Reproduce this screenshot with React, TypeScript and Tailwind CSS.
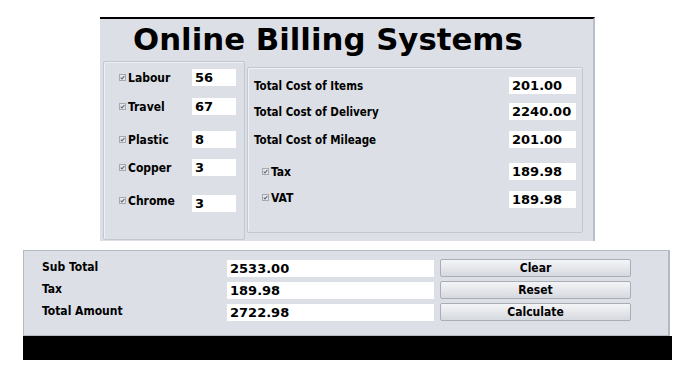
import type { ReactNode } from 'react'

const font = { fontFamily: '"DejaVu Sans Condensed", "DejaVu Sans", sans-serif' }
const wide = { fontFamily: '"DejaVu Sans", sans-serif' }

function Check() {
  return (
    <svg width="7" height="7" viewBox="0 0 7 7" className="mr-[2px] shrink-0">
      <rect x="0.5" y="0.5" width="6" height="6" fill="#e4e6ea" stroke="#a4a9b2" />
      <path d="M1.7 3.6 L3 4.9 L5.4 2" fill="none" stroke="#5f6570" strokeWidth="1.1" />
    </svg>
  )
}

function Field({ value, className }: { value: string; className: string }) {
  return (
    <div
      className={`flex h-[17px] items-center bg-white pl-[3px] text-[13px] font-bold leading-[17px] text-black ${className}`}
      style={wide}
    >
      {value}
    </div>
  )
}

function LeftRow({ label, value, className, raise }: { label: string; value: string; className: string; raise?: boolean }) {
  return (
    <div className={`flex h-[17px] items-center ${className}`}>
      <div className={`flex w-[74px] items-center pl-[1px] ${raise ? '-translate-y-[3px]' : ''}`}>
        <Check />
        <span className="text-[12px] font-bold leading-[14px]">{label}</span>
      </div>
      <Field value={value} className="w-[44px]" />
    </div>
  )
}

function RightRow({ label, value, className, check, raise }: { label: string; value: string; className: string; check?: boolean; raise?: boolean }) {
  return (
    <div className={`flex h-[17px] items-center justify-between ${className}`}>
      {check ? (
        <div className={`flex items-center pl-[8px] ${raise ? '-translate-y-[2px]' : ''}`}>
          <Check />
          <span className="text-[12px] font-bold leading-[14px]">{label}</span>
        </div>
      ) : (
        <span className="text-[11.5px] font-bold leading-[14px]">{label}</span>
      )}
      <Field value={value} className="w-[67px]" />
    </div>
  )
}

function Button({ children }: { children: ReactNode }) {
  return (
    <button className="flex h-[18px] w-[191px] items-center justify-center rounded-[2px] border border-[#a9adb5] bg-gradient-to-b from-[#f4f5f7] to-[#d6d9df] text-[12px] font-bold leading-[14px] text-black">
      {children}
    </button>
  )
}

export default function App() {
  return (
    <div className="h-[376px] w-[700px] overflow-hidden bg-white text-black" style={font}>
      <div className="ml-[100px] mt-[17px] h-[224px] w-[495px] border-t-2 border-r-2 border-black border-r-[#b9bdc5] bg-[#dcdfe5]">
        <h1 className="h-[42px] pl-[33px] text-[30.8px] font-bold leading-[40px]" style={wide}>
          Online Billing Systems
        </h1>
        <div className="flex items-start pl-[3px]">
          <div className="h-[179px] w-[142px] rounded-[2px] border border-[#c3c7cf] pl-[14px] pt-[7px] shadow-[inset_1px_1px_0_#eef0f3]">
            <LeftRow label="Labour" value="56" className="" />
            <LeftRow label="Travel" value="67" className="mt-[12px]" />
            <LeftRow label="Plastic" value="8" className="mt-[16px]" />
            <LeftRow label="Copper" value="3" className="mt-[11px]" />
            <LeftRow label="Chrome" value="3" className="mt-[19px]" raise />
          </div>
          <div className="ml-[2px] mt-[6px] h-[166px] w-[336px] rounded-[2px] border border-[#c3c7cf] pl-[6px] pr-[6px] pt-[9px] shadow-[inset_1px_1px_0_#eef0f3]">
            <RightRow label="Total Cost of Items" value="201.00" className="" />
            <RightRow label="Total Cost of Delivery" value="2240.00" className="mt-[9px]" />
            <RightRow label="Total Cost of Mileage" value="201.00" className="mt-[11px]" />
            <RightRow label="Tax" value="189.98" className="mt-[15px]" check />
            <RightRow label="VAT" value="189.98" className="mt-[11px]" check raise />
          </div>
        </div>
      </div>

      <div className="ml-[23px] mt-[9px] h-[86px] w-[647px] border border-[#b5b9c1] border-r-2 bg-[#dcdfe5] pt-[9px]">
        <div className="flex">
          <div className="flex w-[203px] flex-col pl-[18px] text-[12px] font-bold leading-[14px]">
            <span className="h-[22px]">Sub Total</span>
            <span className="h-[22px]">Tax</span>
            <span className="h-[22px]">Total Amount</span>
          </div>
          <div className="flex flex-col gap-[5px]">
            <Field value="2533.00" className="w-[207px]" />
            <Field value="189.98" className="w-[207px]" />
            <Field value="2722.98" className="w-[207px]" />
          </div>
          <div className="ml-[6px] flex -translate-y-[1px] flex-col gap-[4px]">
            <Button>Clear</Button>
            <Button>Reset</Button>
            <Button>Calculate</Button>
          </div>
        </div>
      </div>
      <div className="ml-[23px] h-[24px] w-[649px] bg-black" />
    </div>
  )
}
